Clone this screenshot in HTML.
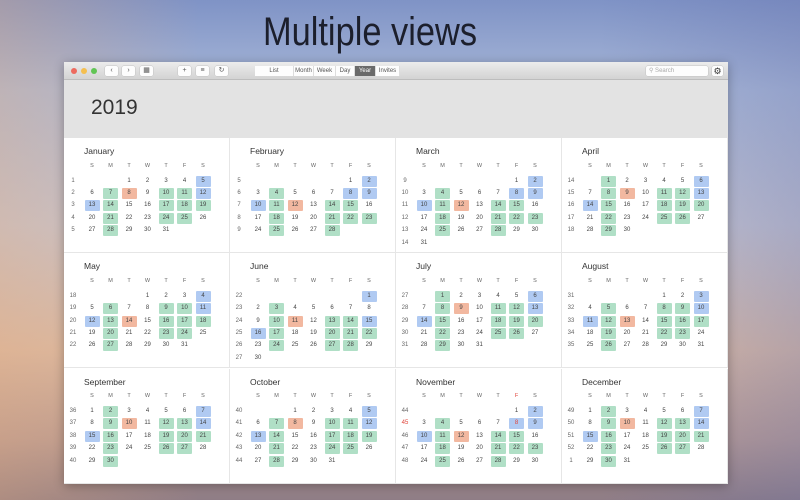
<!DOCTYPE html>
<html><head><meta charset="utf-8">
<style>
*{margin:0;padding:0;box-sizing:border-box}
body{width:800px;height:500px;overflow:hidden;position:relative;font-family:"Liberation Sans",sans-serif;
background:linear-gradient(180deg,#7f93c6 0%,#a9b8d8 18%,#c4c3d0 45%,#d9b9a5 70%,#b79a94 88%,#8f7d86 100%);}
.bg2{position:absolute;inset:0;background:linear-gradient(90deg,rgba(230,170,120,.35) 0%,rgba(0,0,0,0) 25%,rgba(0,0,0,0) 75%,rgba(100,110,170,.3) 100%)}
h1{position:absolute;left:0;width:740px;top:10px;text-align:center;font-weight:normal;font-size:40px;color:#1c1f2c;transform:scaleX(.86);transform-origin:370px 0}
.win{position:absolute;left:64px;top:62px;width:664px;height:422px;background:#fff;box-shadow:0 2px 10px rgba(0,0,0,.3);overflow:hidden}
.tb{position:absolute;left:0;top:0;width:664px;height:18px;background:linear-gradient(#ececec,#d3d3d3);border-bottom:1px solid #bdbdbd}
.dot{position:absolute;top:6px;width:6px;height:6px;border-radius:50%}
.btn{position:absolute;top:4px;height:10px;background:#fdfdfd;border-radius:2px;font-size:7px;color:#555;text-align:center;line-height:10px;box-shadow:0 0 0 .5px #c4c4c4}
.seg{position:absolute;top:4px;height:10px;font-size:6px;color:#555;line-height:10px;text-align:center;background:#fdfdfd;border-right:1px solid #ddd}
.hd{position:absolute;left:0;top:18px;width:664px;height:58px;background:#e3e3e3}
.hd span{position:absolute;left:27px;top:16px;font-size:21px;color:#333}
.m{position:absolute;width:166px;height:115px;border-right:1px solid #e6e6e6;border-bottom:1px solid #e6e6e6;background:#fff}
.t{position:absolute;left:20px;top:8px;font-size:8.5px;color:#333}
.c{position:absolute;width:15px;height:11px;margin-left:-7.5px;margin-top:-5.5px;font-size:6px;color:#444;text-align:center;line-height:11px;border-radius:1px}
.w{color:#666}
.h{color:#666;font-size:5.5px}
.g{background:#b0dfc6}.b{background:#b0caf2}.o{background:#f2b8a0}
</style></head><body>
<div class="bg2"></div>
<h1>Multiple views</h1>
<div class="win">
<div class="tb">
<div class="dot" style="left:7px;background:#ed6a5e"></div>
<div class="dot" style="left:17px;background:#f5bf4f"></div>
<div class="dot" style="left:27px;background:#61c554"></div>
<div class="btn" style="left:41px;width:13px">‹</div>
<div class="btn" style="left:58px;width:13px">›</div>
<div class="btn" style="left:76px;width:13px">▦</div>
<div class="btn" style="left:114px;width:13px">+</div>
<div class="btn" style="left:132px;width:13px">≡</div>
<div class="btn" style="left:151px;width:13px">↻</div>
<div class="seg" style="left:191px;width:39px">List</div>
<div class="seg" style="left:230px;width:20px">Month</div>
<div class="seg" style="left:250px;width:22px">Week</div>
<div class="seg" style="left:272px;width:19px">Day</div>
<div class="seg" style="left:291px;width:21px;background:#6a6a6a;color:#fff">Year</div>
<div class="seg" style="left:312px;width:24px">Invites</div>
<div class="btn" style="left:582px;width:62px;text-align:left;padding-left:3px;color:#aaa;font-size:6px">⚲ Search</div>
<div class="btn" style="left:648px;width:11px;font-size:9px;color:#333">⚙</div>
</div>
<div class="hd"><span>2019</span></div>
<div id="g"></div>
</div>
<script>
var names=["January","February","March","April","May","June","July","August","September","October","November","December"];
var first=[2,5,5,1,3,6,1,4,0,2,5,0],len=[31,28,31,30,31,30,31,31,30,31,30,31],wk=[1,5,9,14,18,22,27,31,36,40,44,49];
var A=[[5,12,13],[8],[7,10,11,14,17,18,19,21,24,25,28]],B=[[2,8,9,10],[12],[4,11,14,15,18,21,22,23,25,28]],
C=[[6,13,14],[9],[1,8,11,12,15,18,19,20,22,25,26,29]],D=[[7,14,15],[10],[2,9,12,13,16,19,20,21,23,26,27,30]];
var hl=[A,B,B,C,[[4,11,12],[14],[6,9,10,13,16,17,18,20,23,24,27]],[[1,15,16],[11],[3,10,13,14,17,20,21,22,24,27,28]],C,
[[3,10,11],[13],[5,8,9,12,15,16,17,19,22,23,26]],D,A,B,D];
var h="",dn="SMTWTFS";
for(var m=0;m<12;m++){
 var x=(m%4)*166,y=76+Math.floor(m/4)*115.3;
 h+='<div class="m" style="left:'+x+'px;top:'+y+'px"><div class="t">'+names[m]+'</div>';
 for(var j=0;j<7;j++)h+='<div class="c h" style="left:'+(28+18.5*j)+'px;top:28px'+(m==10&&j==5?';color:#e0443a':'')+'">'+dn[j]+'</div>';
 var rows=Math.ceil((first[m]+len[m])/7);
 for(var r=0;r<rows;r++){var wn=wk[m]+r;if(wn>52)wn=1;
  h+='<div class="c w" style="left:9px;top:'+(43+12.4*r)+'px'+(m==10&&r==1?';color:#e0443a':'')+'">'+wn+'</div>';}
 for(var d=1;d<=len[m];d++){var p=first[m]+d-1,r=Math.floor(p/7),j=p%7,cl="";
  if(hl[m][0].indexOf(d)>=0)cl=" b";else if(hl[m][1].indexOf(d)>=0)cl=" o";else if(hl[m][2].indexOf(d)>=0)cl=" g";
  h+='<div class="c'+cl+'" style="left:'+(28+18.5*j)+'px;top:'+(43+12.4*r)+'px'+(m==10&&d==8?';color:#e0443a':'')+'">'+d+'</div>';}
 h+='</div>';}
document.getElementById("g").innerHTML=h;
</script>
</body></html>
